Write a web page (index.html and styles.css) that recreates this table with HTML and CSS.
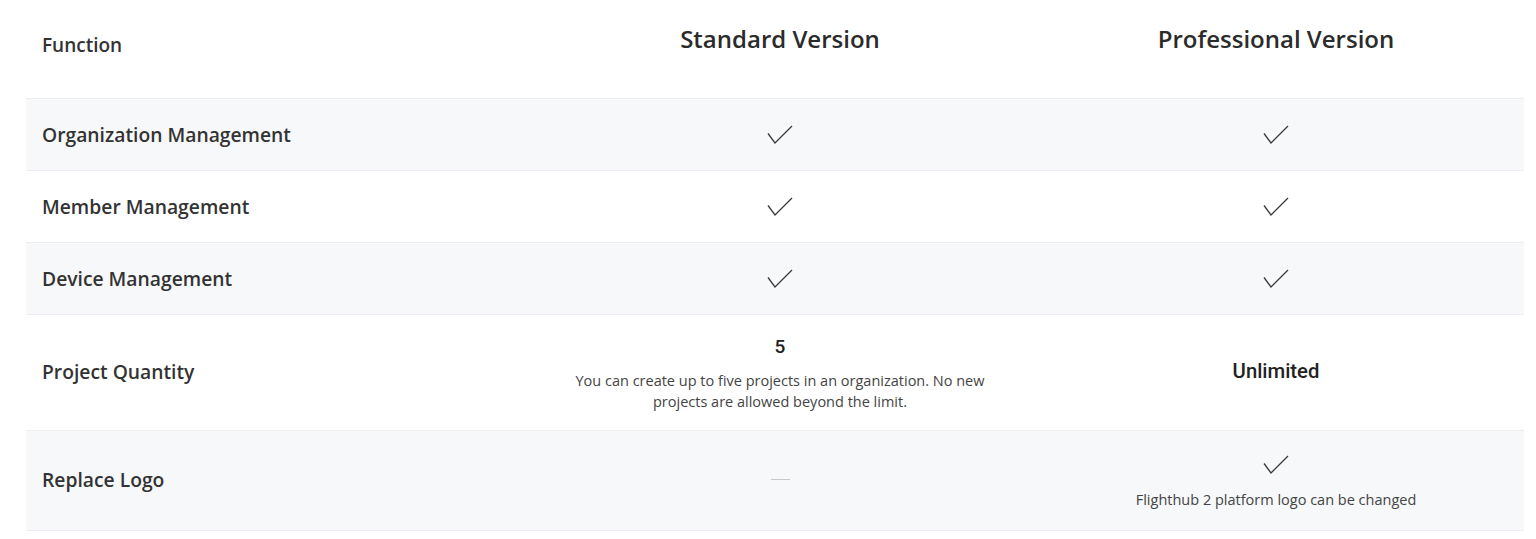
FILE: index.html
```html
<!DOCTYPE html>
<html lang="en">
<head>
    <meta charset="UTF-8">
    <title>Version Comparison</title>
    <link rel="stylesheet" href="styles.css">
</head>
<body>
    <div class="table">
        <div class="row head">
            <div class="cell label func">Function</div>
            <div class="cell ver">Standard Version</div>
            <div class="cell ver">Professional Version</div>
        </div>

        <div class="row gray">
            <div class="cell label">Organization Management</div>
            <div class="cell"><svg class="check" viewBox="0 0 26 19"><polyline points="1,8.5 8,18 25,1"/></svg></div>
            <div class="cell"><svg class="check" viewBox="0 0 26 19"><polyline points="1,8.5 8,18 25,1"/></svg></div>
        </div>

        <div class="row">
            <div class="cell label">Member Management</div>
            <div class="cell"><svg class="check" viewBox="0 0 26 19"><polyline points="1,8.5 8,18 25,1"/></svg></div>
            <div class="cell"><svg class="check" viewBox="0 0 26 19"><polyline points="1,8.5 8,18 25,1"/></svg></div>
        </div>

        <div class="row gray">
            <div class="cell label">Device Management</div>
            <div class="cell"><svg class="check" viewBox="0 0 26 19"><polyline points="1,8.5 8,18 25,1"/></svg></div>
            <div class="cell"><svg class="check" viewBox="0 0 26 19"><polyline points="1,8.5 8,18 25,1"/></svg></div>
        </div>

        <div class="row tall">
            <div class="cell label">Project Quantity</div>
            <div class="cell">
                <div class="value five">5</div>
                <div class="desc">You can create up to five projects in an organization. No new projects are allowed beyond the limit.</div>
            </div>
            <div class="cell unlimited">
                <div class="value">Unlimited</div>
            </div>
        </div>

        <div class="row gray logo-row">
            <div class="cell label lift">Replace Logo</div>
            <div class="cell lift"><span class="dash"></span></div>
            <div class="cell">
                <svg class="check" viewBox="0 0 26 19"><polyline points="1,8.5 8,18 25,1"/></svg>
                <div class="desc small">Flighthub 2 platform logo can be changed</div>
            </div>
        </div>
    </div>
</body>
</html>
```

FILE: styles.css
```css
body {
    margin: 0;
    padding: 0;
    background-color: #fff;
    font-family: "Open Sans", "Noto Sans", sans-serif;
    color: #333;
}
.table {
    margin: 0 12px 0 26px;
}
.row {
    display: grid;
    grid-template-columns: 506px 496px 496px;
    min-height: 71px;
    border-bottom: 1px solid #eceef1;
}
.row.gray {
    background-color: #f7f8fa;
}
.head {
    min-height: 98px;
}
.cell {
    display: flex;
    flex-direction: column;
    align-items: center;
    justify-content: center;
    text-align: center;
}
.cell.label {
    align-items: flex-start;
    padding-left: 16px;
    font-size: 19.3px;
    font-weight: 600;
    color: #333;
}
.head .func {
    font-size: 19px;
    padding-bottom: 9px;
}
.head .ver {
    font-size: 24px;
    font-weight: 600;
    color: #2b2b2b;
    padding-bottom: 22px;
}
.check {
    width: 26px;
    height: 19px;
}
.check polyline {
    fill: none;
    stroke: #3a3a3a;
    stroke-width: 1.3;
}
.tall {
    padding: 20px 0 18px;
}
.tall .label {
    padding-bottom: 4px;
}
.unlimited {
    padding-bottom: 6px;
}
.value {
    font-family: Roboto, "Liberation Sans", sans-serif;
    font-size: 20.3px;
    font-weight: 500;
    line-height: 24px;
    color: #222;
}
.value.five {
    font-size: 19px;
}
.desc {
    max-width: 430px;
    margin-top: 11px;
    font-size: 14.5px;
    line-height: 21px;
    color: #444;
}
.logo-row {
    padding: 16px 0 12px;
}
.logo-row .lift {
    padding-bottom: 6px;
}
.desc.small {
    margin-top: 15px;
}
.dash {
    display: block;
    width: 19px;
    height: 1px;
    background-color: #c8c8c8;
}
```
